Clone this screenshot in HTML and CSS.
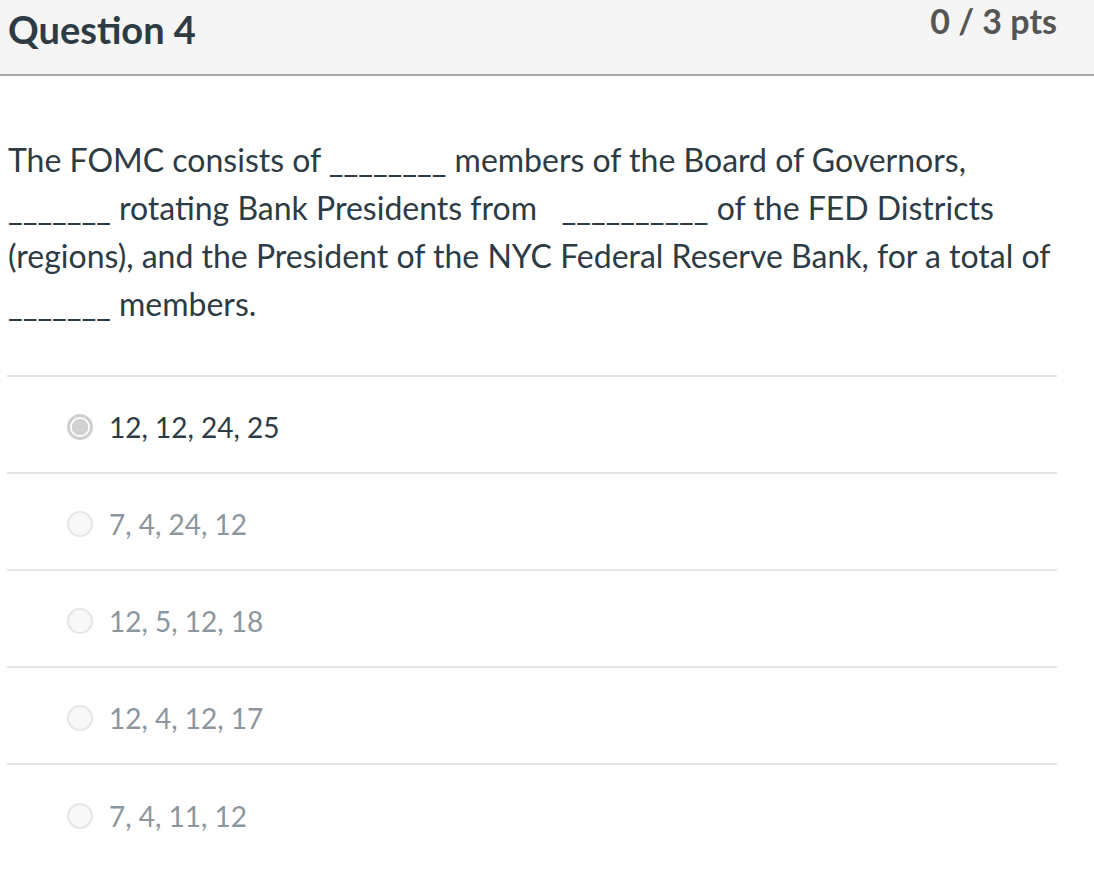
FILE: index.html
```html
<!DOCTYPE html>
<html lang="en">
<head>
<meta charset="utf-8">
<title>Question 4</title>
<link rel="stylesheet" href="styles.css">
</head>
<body>
<div class="quiz-question">
  <div class="header">
    <h2 class="title">Question 4</h2>
    <div class="points">0 / 3 pts</div>
  </div>
  <div class="content">
    <p class="question-text">The FOMC consists of ________ members of the Board of Governors, _______ rotating Bank Presidents from &nbsp;&nbsp;__________ of the FED Districts (regions), and the President of the NYC Federal Reserve Bank, for a total of _______ members.</p>
    <div class="answers">
      <div class="answer selected">
        <span class="radio"></span>
        <span class="label">12, 12, 24, 25</span>
      </div>
      <div class="answer">
        <span class="radio"></span>
        <span class="label">7, 4, 24, 12</span>
      </div>
      <div class="answer">
        <span class="radio"></span>
        <span class="label">12, 5, 12, 18</span>
      </div>
      <div class="answer">
        <span class="radio"></span>
        <span class="label">12, 4, 12, 17</span>
      </div>
      <div class="answer last">
        <span class="radio"></span>
        <span class="label">7, 4, 11, 12</span>
      </div>
    </div>
  </div>
</div>
</body>
</html>
```
FILE: styles.css
```css
html, body {
  margin: 0;
  padding: 0;
  background: #ffffff;
}
body {
  font-family: Lato, "Open Sans", sans-serif;
  color: #2d3b45;
}
.header {
  background: #f5f5f5;
  border-bottom: 2px solid #aaaaaa;
  height: 74px;
  display: flex;
  justify-content: space-between;
  align-items: flex-start;
  padding: 0 37px 0 8px;
}
.title {
  margin: 0;
  padding-top: 6px;
  font-size: 38px;
  font-weight: 700;
  line-height: 46px;
  color: #2d3b45;
}
.points {
  padding-top: 0;
  font-size: 34px;
  font-weight: 700;
  line-height: 41px;
  color: #555555;
}
.content {
  padding: 60px 37px 0 7px;
}
.question-text {
  margin: 0 0 47px 1px;
  font-size: 32px;
  line-height: 48px;
}
.answers {
  border-top: 2px solid #e3e3e3;
}
.answer {
  box-sizing: border-box;
  display: flex;
  align-items: center;
  gap: 16px;
  height: 97px;
  padding: 4px 0 0 60px;
  border-bottom: 2px solid #e6e6e6;
  font-size: 28px;
  color: #8b969e;
}
.answer.last {
  border-bottom: none;
}
.answer.selected {
  color: #2d3b45;
}
.radio {
  box-sizing: border-box;
  width: 26px;
  height: 26px;
  border-radius: 50%;
  border: 2px solid #e6e6e6;
  background: #f8f8f8;
  flex: none;
}
.answer.selected .radio {
  border: 3px solid #cfcfcf;
  background: radial-gradient(circle, #d2d2d2 0 8px, #ffffff 8.5px);
}
```
